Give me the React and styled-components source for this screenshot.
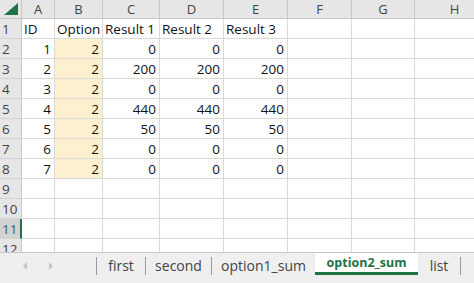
import styled, { createGlobalStyle } from "styled-components";

const Global = createGlobalStyle`
  html, body { margin: 0; padding: 0; background: #fff; }
  body { width: 474px; height: 283px; overflow: hidden; font-family: "Open Sans", "Liberation Sans", sans-serif; }
`;

const Page = styled.div`
  display: flex;
  flex-direction: column;
  width: 474px;
  height: 283px;
  overflow: hidden;
`;

const Sheet = styled.div`
  display: grid;
  grid-template-columns: 22px 33px 48px 57px 64px 64px 64px 63px 80px;
  grid-template-rows: 19px repeat(12, 20px);
  height: 252px;
  overflow: hidden;
  flex: none;
`;

const Corner = styled.div`
  background: #e6e6e6;
  border-right: 1px solid #c8c8c8;
  border-bottom: 1px solid #c8c8c8;
  display: flex;
  align-items: flex-end;
  justify-content: flex-end;
  padding: 0 3px 3px 0;
`;

const ColHead = styled.div`
  background: #e6e6e6;
  border-right: 1px solid #c8c8c8;
  border-bottom: 1px solid #c8c8c8;
  color: #444;
  font-size: 13px;
  display: flex;
  align-items: center;
  justify-content: center;
`;

const RowHead = styled.div`
  background: ${p => (p.active ? "#d2d2d2" : "#e6e6e6")};
  border-right: ${p => (p.active ? "2px solid #217346" : "1px solid #c8c8c8")};
  border-bottom: 1px solid #d4d4d4;
  color: ${p => (p.active ? "#31684a" : "#444")};
  font-size: 13.5px;
  display: flex;
  align-items: center;
  padding-left: 2px;
`;

const Cell = styled.div`
  background: ${p => (p.fill ? "#fdf0cf" : "#fff")};
  border-right: 1px solid #d9d9d9;
  border-bottom: 1px solid #d9d9d9;
  color: #111;
  font-size: 13.5px;
  display: flex;
  align-items: center;
  justify-content: ${p => (p.num ? "flex-end" : "flex-start")};
  padding: 0 3px 0 2px;
  white-space: nowrap;
  overflow: visible;
`;

const TabBar = styled.div`
  flex: 1;
  display: flex;
  align-items: flex-start;
  background: #efefef;
  border-top: 1px solid #c6c6c6;
`;

const Nav = styled.div`
  width: 96px;
  height: 25px;
  display: flex;
  align-items: center;
  padding-left: 23px;
  gap: 22px;
  box-sizing: border-box;
`;

const Arrow = styled.span`
  width: 0;
  height: 0;
  border-top: 4px solid transparent;
  border-bottom: 4px solid transparent;
  ${p => (p.dir === "left" ? "border-right: 4px solid #c4c4c4;" : "border-left: 4px solid #c4c4c4;")}
`;

const Tab = styled.div`
  height: ${p => (p.active ? "22px" : "25px")};
  display: flex;
  align-items: center;
  justify-content: center;
  width: ${p => p.w}px;
  box-sizing: border-box;
  font-size: ${p => (p.active ? "12.5px" : "14px")};
  color: ${p => (p.active ? "#217346" : "#444")};
  font-weight: ${p => (p.active ? 700 : 400)};
  background: ${p => (p.active ? "#fff" : "transparent")};
  border-bottom: ${p => (p.active ? "3px solid #217346" : "none")};
`;

const Sep = styled.span`
  width: 1px;
  height: 18px;
  margin-top: 4px;
  background: #9a9a9a;
  flex: none;
`;

const cols = ["A", "B", "C", "D", "E", "F", "G", "H"];

const rows = [
  ["ID", "Option", "Result 1", "Result 2", "Result 3"],
  [1, 2, 0, 0, 0],
  [2, 2, 200, 200, 200],
  [3, 2, 0, 0, 0],
  [4, 2, 440, 440, 440],
  [5, 2, 50, 50, 50],
  [6, 2, 0, 0, 0],
  [7, 2, 0, 0, 0],
];

function CornerMark() {
  return (
    <svg width="14" height="12" viewBox="0 0 14 12">
      <polygon points="14,0 14,12 0,12" fill="#1f7346" />
    </svg>
  );
}

function App() {
  const cells = [];
  cells.push(<Corner key="corner"><CornerMark /></Corner>);
  cols.forEach(c => cells.push(<ColHead key={"h" + c}>{c}</ColHead>));
  for (let r = 1; r <= 12; r++) {
    cells.push(<RowHead key={"r" + r} active={r === 11}>{r}</RowHead>);
    const data = rows[r - 1] || [];
    cols.forEach((c, i) => {
      const v = data[i];
      cells.push(
        <Cell
          key={c + r}
          num={typeof v === "number"}
          fill={c === "B" && r >= 2 && r <= 8}
        >
          {v}
        </Cell>
      );
    });
  }

  return (
    <Page>
      <Global />
      <Sheet>{cells}</Sheet>
      <TabBar>
        <Nav>
          <Arrow dir="left" />
          <Arrow dir="right" />
        </Nav>
        <Sep />
        <Tab w={48}>first</Tab>
        <Sep />
        <Tab w={65}>second</Tab>
        <Sep />
        <Tab w={103}>option1_sum</Tab>
        <Tab w={103} active>option2_sum</Tab>
        <Tab w={42}>list</Tab>
        <Sep />
      </TabBar>
    </Page>
  );
}

export default App;
